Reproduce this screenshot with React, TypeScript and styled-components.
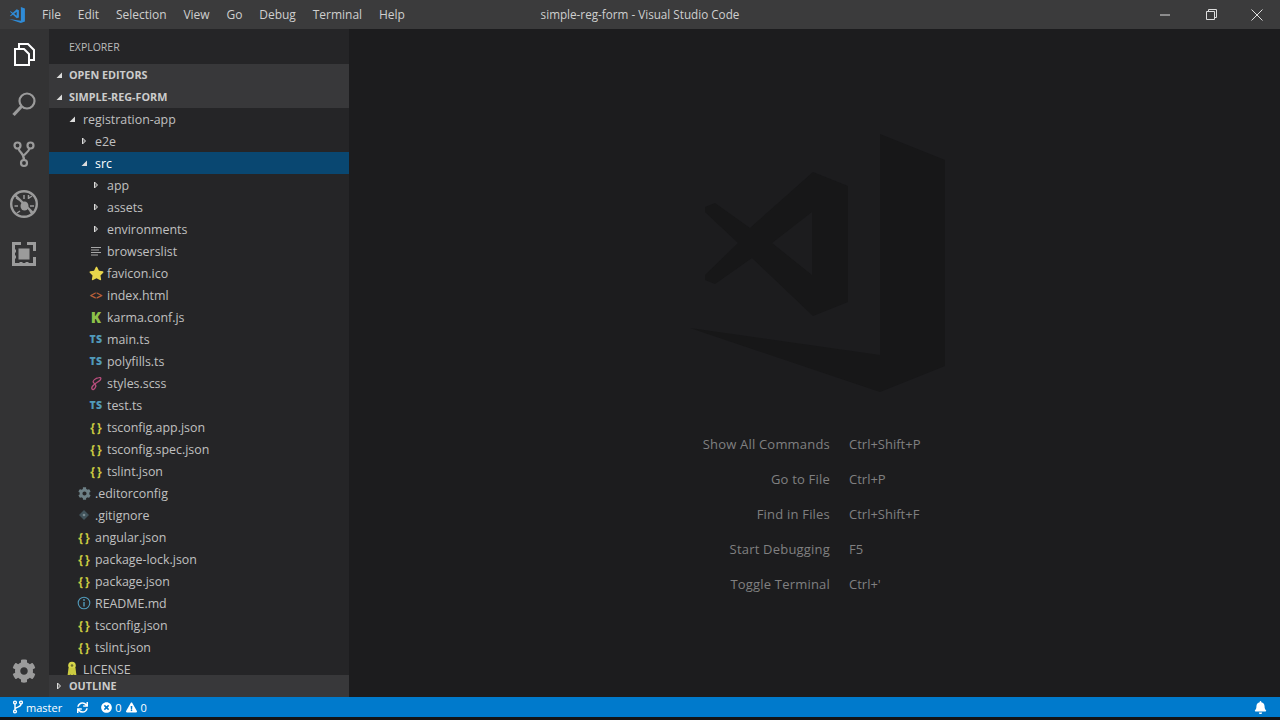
import React from 'react';
import styled, {createGlobalStyle} from 'styled-components';
import {FaBell, FaCog, FaExclamationTriangle, FaStar, FaSync, FaTimesCircle} from 'react-icons/fa';

const LOGO = 'M880 134 L945 160 V366 L880 392 L690 328 L880 355 Z M813 172 L848 186 V302 L813 316 L752 258 L715 284 L705 280 V275 L738 243 L705 212 V207 L715 203 L750 228 Z M812 212 L772 243 L812 275 Z';

const MENU = ['File', 'Edit', 'Selection', 'View', 'Go', 'Debug', 'Terminal', 'Help'];

const SHORTCUTS = [
  ['Show All Commands', 'Ctrl+Shift+P'],
  ['Go to File', 'Ctrl+P'],
  ['Find in Files', 'Ctrl+Shift+F'],
  ['Start Debugging', 'F5'],
  ['Toggle Terminal', "Ctrl+'"],
];

type Kind = 'open' | 'closed' | 'lines' | 'star' | 'html' | 'karma' | 'ts' | 'sass' | 'json' | 'gear' | 'git' | 'info' | 'license';

const TREE: {name: string; depth: number; kind: Kind; selected?: boolean}[] = [
  {name: 'registration-app', depth: 1, kind: 'open'},
  {name: 'e2e', depth: 2, kind: 'closed'},
  {name: 'src', depth: 2, kind: 'open', selected: true},
  {name: 'app', depth: 3, kind: 'closed'},
  {name: 'assets', depth: 3, kind: 'closed'},
  {name: 'environments', depth: 3, kind: 'closed'},
  {name: 'browserslist', depth: 3, kind: 'lines'},
  {name: 'favicon.ico', depth: 3, kind: 'star'},
  {name: 'index.html', depth: 3, kind: 'html'},
  {name: 'karma.conf.js', depth: 3, kind: 'karma'},
  {name: 'main.ts', depth: 3, kind: 'ts'},
  {name: 'polyfills.ts', depth: 3, kind: 'ts'},
  {name: 'styles.scss', depth: 3, kind: 'sass'},
  {name: 'test.ts', depth: 3, kind: 'ts'},
  {name: 'tsconfig.app.json', depth: 3, kind: 'json'},
  {name: 'tsconfig.spec.json', depth: 3, kind: 'json'},
  {name: 'tslint.json', depth: 3, kind: 'json'},
  {name: '.editorconfig', depth: 2, kind: 'gear'},
  {name: '.gitignore', depth: 2, kind: 'git'},
  {name: 'angular.json', depth: 2, kind: 'json'},
  {name: 'package-lock.json', depth: 2, kind: 'json'},
  {name: 'package.json', depth: 2, kind: 'json'},
  {name: 'README.md', depth: 2, kind: 'info'},
  {name: 'tsconfig.json', depth: 2, kind: 'json'},
  {name: 'tslint.json', depth: 2, kind: 'json'},
  {name: 'LICENSE', depth: 1, kind: 'license'},
];

function Twisty({open}: {open: boolean}) {
  return open ? (
    <svg width="8" height="8" viewBox="0 0 8 8"><path d="M7 1.5 V7 H1.5 Z" fill="#dcdcdc"/></svg>
  ) : (
    <svg width="8" height="10" viewBox="0 0 8 10"><path d="M2.5 2 L5.5 5 L2.5 8 Z" fill="#666" stroke="#dcdcdc"/></svg>
  );
}

function FileIcon({kind}: {kind: Kind}) {
  switch (kind) {
    case 'open':
      return <Twisty open/>;
    case 'closed':
      return <Twisty open={false}/>;
    case 'lines':
      return (
        <svg width="12" height="12" viewBox="0 0 12 12">
          <path d="M1 2.5 H11 M1 5 H9 M1 7.5 H11 M1 10 H8" stroke="#a8a8a8" strokeWidth="1.1"/>
        </svg>
      );
    case 'star':
      return <FaStar size={15} color="#e9d64b"/>;
    case 'html':
      return <HtmlGlyph>{'<>'}</HtmlGlyph>;
    case 'karma':
      return <KarmaGlyph>K</KarmaGlyph>;
    case 'ts':
      return <TsGlyph>TS</TsGlyph>;
    case 'sass':
      return (
        <svg width="14" height="15" viewBox="0 0 13 14" fill="none">
          <path d="M3 12.5 C1 10 6 7 9 5 C12 3 11.5 1 9 1.5 C6 2 3 4.5 4 6 C5 7.5 7.5 8 6 10.5 C5 12.5 3.5 13 3 12.5 Z" stroke="#b84d7c" strokeWidth="1.2"/>
        </svg>
      );
    case 'json':
      return <JsonGlyph>{'{}'}</JsonGlyph>;
    case 'gear':
      return <FaCog size={13} color="#6d8086"/>;
    case 'git':
      return (
        <svg width="12" height="12" viewBox="0 0 12 12">
          <path d="M6 1 L11 6 L6 11 L1 6 Z" fill="#41535b"/>
          <circle cx="6" cy="6" r="1.3" fill="#7a8a90"/>
        </svg>
      );
    case 'info':
      return (
        <svg width="14" height="14" viewBox="0 0 14 14" fill="none">
          <circle cx="7" cy="7" r="5.8" stroke="#519aba" strokeWidth="1.1"/>
          <path d="M7 6 V10.5" stroke="#519aba" strokeWidth="1.4"/>
          <circle cx="7" cy="4" r="0.9" fill="#519aba"/>
        </svg>
      );
    case 'license':
      return (
        <svg width="12" height="16" viewBox="0 0 12 16">
          <circle cx="6" cy="4.5" r="3.8" fill="#d6d64a"/>
          <circle cx="6" cy="4.5" r="1.3" fill="#6f7030"/>
          <path d="M2.5 7 L1.5 15 L4.5 13.5 L6 15 L7.5 13.5 L10.5 15 L9.5 7 Z" fill="#cbcb41"/>
        </svg>
      );
  }
}

export default function App() {
  return (
    <Page>
      <GlobalStyle/>
      <TitleBar>
        <MenuArea>
          <TitleLogo viewBox="690 134 255 258"><path d={LOGO} fill="#2f8bd6" fillRule="evenodd"/></TitleLogo>
          {MENU.map(item => <MenuItem key={item}>{item}</MenuItem>)}
        </MenuArea>
        <WindowTitle>simple-reg-form - Visual Studio Code</WindowTitle>
        <WindowControls>
          <WindowButton>
            <svg width="10" height="10" viewBox="0 0 10 10"><path d="M0 5 H10" stroke="#ddd"/></svg>
          </WindowButton>
          <WindowButton>
            <svg width="11" height="11" viewBox="0 0 11 11" fill="none">
              <path d="M0.5 2.5 H8.5 V10.5 H0.5 Z M2.5 2.5 V0.5 H10.5 V8.5 H8.5" stroke="#ddd"/>
            </svg>
          </WindowButton>
          <WindowButton>
            <svg width="12" height="12" viewBox="0 0 12 12"><path d="M0.5 0.5 L11.5 11.5 M11.5 0.5 L0.5 11.5" stroke="#ddd"/></svg>
          </WindowButton>
        </WindowControls>
      </TitleBar>

      <Workbench>
        <ActivityBar>
          <ActivityItem>
            <svg width="24" height="26" viewBox="0 0 24 26" fill="none" stroke="#fff" strokeWidth="2">
              <path d="M3 8 H12 L17 13 V24 H3 Z"/>
              <path d="M7 8 V3 H16 L22 9 V19 H17"/>
            </svg>
          </ActivityItem>
          <ActivityItem>
            <svg width="28" height="28" viewBox="0 0 28 28" fill="none" stroke="#9b9b9b">
              <circle cx="17" cy="11" r="7.5" strokeWidth="2.2"/>
              <path d="M11.5 16.5 L3.5 25" strokeWidth="3.2"/>
            </svg>
          </ActivityItem>
          <ActivityItem>
            <svg width="28" height="28" viewBox="0 0 28 28" fill="none" stroke="#9b9b9b" strokeWidth="2.2">
              <circle cx="7.5" cy="5.5" r="3"/>
              <circle cx="20.5" cy="5.5" r="3"/>
              <circle cx="14" cy="23" r="3"/>
              <path d="M8.5 8.5 C9.5 13 14 13 14 20 M19.5 8.5 C18.5 12 15.5 13 14 15.5"/>
            </svg>
          </ActivityItem>
          <ActivityItem>
            <svg width="30" height="30" viewBox="0 0 30 30" fill="none" stroke="#9b9b9b">
              <circle cx="15" cy="15" r="12.8" strokeWidth="2.4"/>
              <path d="M6 6 L24 24" strokeWidth="2.4"/>
              <ellipse cx="15.5" cy="17" rx="4" ry="4.5" fill="#9b9b9b" strokeWidth="0"/>
              <path d="M10 11 L7 9 M20 9 L23 7 M9 17 H5.5 M21 17 H25 M11 22 L8 24 M21 22 L23 25 M15 6 V10 M19.5 6 V10" strokeWidth="1.5"/>
            </svg>
          </ActivityItem>
          <ActivityItem>
            <svg width="24" height="24" viewBox="0 0 24 24" fill="none">
              <path d="M9 1.5 H1.5 V22.5 H22.5 V15 M15 1.5 H22.5 V9 M1.5 9 H4 M1.5 15 H4 M9 22.5 V20 M15 22.5 V20" stroke="#9b9b9b" strokeWidth="3"/>
              <rect x="6.5" y="6.5" width="11" height="11" fill="#9b9b9b"/>
            </svg>
          </ActivityItem>
          <ActivitySpacer/>
          <ActivityItem>
            <FaCog size={24} color="#9b9b9b"/>
          </ActivityItem>
        </ActivityBar>

        <SideBar>
          <SideTitle>EXPLORER</SideTitle>
          <SectionHeader><SectionArrow><Twisty open/></SectionArrow>OPEN EDITORS</SectionHeader>
          <SectionHeader><SectionArrow><Twisty open/></SectionArrow>SIMPLE-REG-FORM</SectionHeader>
          <TreeList>
            {TREE.map(row => (
              <TreeRow key={row.name + row.depth} $depth={row.depth} $selected={row.selected}>
                <IconSlot><FileIcon kind={row.kind}/></IconSlot>
                <span>{row.name}</span>
              </TreeRow>
            ))}
          </TreeList>
          <SectionHeader><SectionArrow><Twisty open={false}/></SectionArrow>OUTLINE</SectionHeader>
        </SideBar>

        <Editor>
          <Watermark viewBox="690 134 255 258"><path d={LOGO} fill="#171718" fillRule="evenodd"/></Watermark>
          <Shortcuts>
            {SHORTCUTS.map(([label, keys]) => (
              <React.Fragment key={label}>
                <ShortcutLabel>{label}</ShortcutLabel>
                <ShortcutKeys>{keys}</ShortcutKeys>
              </React.Fragment>
            ))}
          </Shortcuts>
        </Editor>
      </Workbench>

      <StatusBar>
        <StatusItem>
          <svg width="10" height="14" viewBox="0 0 10 14" fill="none" stroke="#fff" strokeWidth="1.4">
            <circle cx="2" cy="2.5" r="1.4"/>
            <circle cx="8" cy="2.5" r="1.4"/>
            <circle cx="2" cy="11.5" r="1.4"/>
            <path d="M2 4 V10 M8 4 C8 7.5 3 6.5 2 9"/>
          </svg>
          master
        </StatusItem>
        <SyncItem><FaSync size={11}/></SyncItem>
        <StatusItem>
          <FaTimesCircle size={11}/>
          0
          <WarnIcon><FaExclamationTriangle size={11}/></WarnIcon>
          0
        </StatusItem>
        <BellItem><FaBell size={13}/></BellItem>
      </StatusBar>
      <BottomEdge/>
    </Page>
  );
}

const GlobalStyle = createGlobalStyle`
  html, body {
    margin: 0;
    height: 100%;
    overflow: hidden;
    background: #1c1c1e;
  }
  #root {
    height: 100%;
  }
`;

const Page = styled.div`
  display: flex;
  flex-direction: column;
  height: 720px;
  font-family: "Open Sans", "Liberation Sans", sans-serif;
  color: #ccc;
`;

const TitleBar = styled.header`
  display: grid;
  grid-template-columns: 1fr auto 1fr;
  align-items: center;
  height: 29px;
  flex: none;
  background: #3b3b3c;
`;

const MenuArea = styled.nav`
  display: flex;
  align-items: center;
  padding-left: 9px;
`;

const TitleLogo = styled.svg`
  width: 16px;
  height: 16px;
  margin-right: 17px;
`;

const MenuItem = styled.span`
  font-size: 12px;
  color: #cfcfcf;
  margin-right: 16.8px;
`;

const WindowTitle = styled.div`
  font-size: 11.7px;
  color: #cfcfcf;
  padding-bottom: 1px;
`;

const WindowControls = styled.div`
  display: flex;
  justify-content: flex-end;
`;

const WindowButton = styled.div`
  display: flex;
  align-items: center;
  justify-content: center;
  width: 46px;
  height: 29px;
`;

const Workbench = styled.div`
  display: flex;
  flex: 1;
  min-height: 0;
`;

const ActivityBar = styled.aside`
  display: flex;
  flex-direction: column;
  width: 49px;
  flex: none;
  background: #333334;
  padding-bottom: 1px;
  box-sizing: border-box;
`;

const ActivityItem = styled.div`
  display: flex;
  align-items: center;
  justify-content: center;
  height: 50px;
  padding-right: 2px;
`;

const ActivitySpacer = styled.div`
  flex: 1;
`;

const SideBar = styled.aside`
  display: flex;
  flex-direction: column;
  width: 300px;
  flex: none;
  background: #252527;
`;

const SideTitle = styled.div`
  display: flex;
  align-items: center;
  height: 35px;
  padding-left: 20px;
  font-size: 10.5px;
  color: #bbb;
`;

const SectionHeader = styled.div`
  display: flex;
  align-items: center;
  box-sizing: border-box;
  height: 22px;
  padding-bottom: 1px;
  flex: none;
  background: #38383a;
  font-size: 10.8px;
  font-weight: 700;
  color: #ccc;
`;

const SectionArrow = styled.span`
  display: flex;
  align-items: center;
  justify-content: center;
  width: 20px;
`;

const TreeList = styled.div`
  flex: 1;
  min-height: 0;
  overflow: hidden;
`;

const TreeRow = styled.div<{$depth: number; $selected?: boolean}>`
  display: flex;
  align-items: center;
  height: 22px;
  padding-left: ${p => p.$depth * 12}px;
  font-size: 12.4px;
  color: ${p => (p.$selected ? '#fff' : '#c0c0c0')};
  background: ${p => (p.$selected ? '#094771' : 'transparent')};
`;

const IconSlot = styled.span`
  display: flex;
  align-items: center;
  justify-content: center;
  width: 22px;
  flex: none;
`;

const TsGlyph = styled.span`
  font-size: 10.5px;
  font-weight: 800;
  letter-spacing: 0.4px;
  color: #519aba;
`;

const JsonGlyph = styled.span`
  font-size: 12px;
  font-weight: 700;
  letter-spacing: 2px;
  margin-right: -2px;
  color: #cbcb41;
`;

const HtmlGlyph = styled.span`
  font-size: 11.5px;
  font-weight: 700;
  color: #b8603a;
`;

const KarmaGlyph = styled.span`
  font-size: 15px;
  font-weight: 800;
  color: #8dc149;
`;

const Editor = styled.main`
  flex: 1;
  min-width: 0;
  background: #1c1c1e;
`;

const Watermark = styled.svg`
  display: block;
  width: 255px;
  height: 258px;
  margin: 105px 0 0 341px;
`;

const Shortcuts = styled.div`
  display: grid;
  grid-template-columns: 481px auto;
  grid-auto-rows: 35px;
  column-gap: 19px;
  align-items: center;
  margin-top: 34px;
  font-size: 13px;
  color: #808081;
`;

const ShortcutLabel = styled.div`
  text-align: right;
  letter-spacing: 0.2px;
`;

const ShortcutKeys = styled.div``;

const StatusBar = styled.footer`
  display: flex;
  align-items: center;
  height: 20px;
  flex: none;
  padding-left: 13px;
  background: #007acc;
  color: #fff;
  font-size: 11px;
`;

const StatusItem = styled.div`
  display: flex;
  align-items: center;
  gap: 3px;
`;

const SyncItem = styled.div`
  display: flex;
  margin: 0 13px 0 15px;
`;

const WarnIcon = styled.span`
  display: flex;
  margin-left: 2px;
`;

const BellItem = styled.div`
  display: flex;
  margin-left: auto;
  margin-right: 13px;
`;

const BottomEdge = styled.div`
  height: 3px;
  flex: none;
  background: #141415;
`;
